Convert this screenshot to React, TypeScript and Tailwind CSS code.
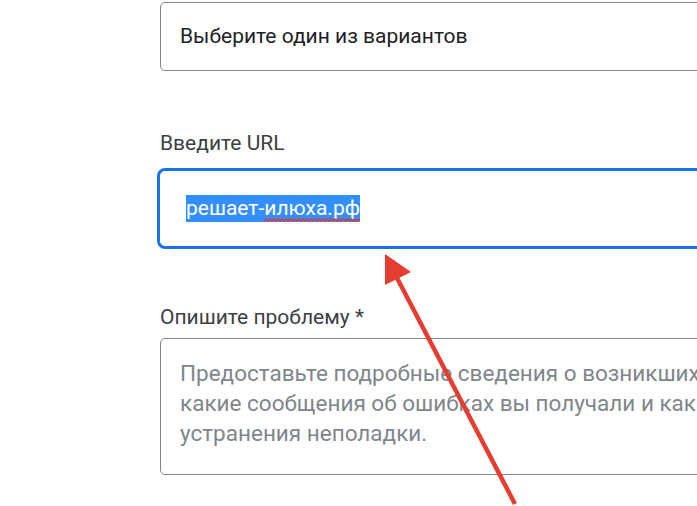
import React from 'react';

const font = { fontFamily: 'Roboto, "Noto Sans", sans-serif' };

// spell-check squiggle drawn under a misspelled word
const Squiggle: React.FC = () => {
  let d = 'M0 3';
  for (let x = 0; x < 100; x += 4) d += ` L${x + 2} 1 L${x + 4} 3`;
  return (
    <svg className="absolute left-0 bottom-0 w-full h-[4px]" viewBox="0 0 94 4" preserveAspectRatio="none">
      <path d={d} fill="none" stroke="#e8322a" strokeWidth="1.4" vectorEffect="non-scaling-stroke" />
    </svg>
  );
};

const App: React.FC = () => {
  return (
    <div className="relative w-[697px] h-[506px] overflow-hidden bg-white" style={font}>
      {/* FORM */}
      <div className="pl-[160px] pt-[2px] w-[900px] flex flex-col">
        {/* Select */}
        <div className="w-[700px] h-[69px] border border-[#80868b] rounded-[5px] flex items-center px-[19px] text-[21px] text-[#202124]">
          Выберите один из вариантов
        </div>

        {/* URL */}
        <label className="mt-[58px] h-[28px] leading-[28px] text-[21px] text-[#3c4043]">Введите URL</label>
        <div className="mt-[11px] -ml-[3px] w-[706px] h-[81px] border-[3px] border-[#1a73e8] rounded-[8px] flex items-center pl-[26px] text-[21px]">
          <span className="bg-[#338fff] text-white leading-[27px]">
            решает-
            <span className="relative inline-block">
              илюха.рф
              <Squiggle />
            </span>
          </span>
        </div>

        {/* Problem */}
        <label className="mt-[54px] h-[28px] leading-[28px] text-[21px] text-[#3c4043]">Опишите проблему *</label>
        <div className="mt-[7px] w-[700px] h-[137px] border border-[#80868b] rounded-[5px] px-[19px] pt-[19px] text-[22.5px] leading-[30px] text-[#80868b] whitespace-nowrap">
          Предоставьте подробные сведения о возникших проблемах,
          <br />
          какие сообщения об ошибках вы получали и какие шаги
          <br />
          устранения неполадки.
        </div>
      </div>

      {/* ANNOTATION ARROW */}
      <svg className="absolute inset-0 pointer-events-none" width="697" height="506" viewBox="0 0 697 506">
        <line x1="396" y1="276" x2="515" y2="504" stroke="#e53d30" strokeWidth="4.5" />
        <polygon points="385,254 411,272 385,285" fill="#e53d30" />
      </svg>
    </div>
  );
};

export default App;
